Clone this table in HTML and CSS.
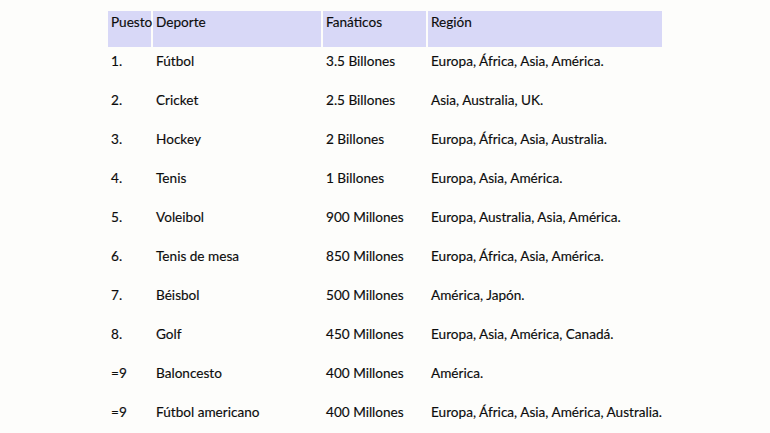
FILE: index.html
```html
<!DOCTYPE html>
<html lang="es">
<head>
<meta charset="utf-8">
<title>Deportes</title>
<link rel="stylesheet" href="styles.css">
</head>
<body>
<div class="page">
  <div class="table">
    <div class="cell head">Puesto</div>
    <div class="cell head">Deporte</div>
    <div class="cell head">Fanáticos</div>
    <div class="cell head">Región</div>

    <div class="cell">1.</div><div class="cell">Fútbol</div><div class="cell">3.5 Billones</div><div class="cell">Europa, África, Asia, América.</div>
    <div class="cell">2.</div><div class="cell">Cricket</div><div class="cell">2.5 Billones</div><div class="cell">Asia, Australia, UK.</div>
    <div class="cell">3.</div><div class="cell">Hockey</div><div class="cell">2 Billones</div><div class="cell">Europa, África, Asia, Australia.</div>
    <div class="cell">4.</div><div class="cell">Tenis</div><div class="cell">1 Billones</div><div class="cell">Europa, Asia, América.</div>
    <div class="cell">5.</div><div class="cell">Voleibol</div><div class="cell">900 Millones</div><div class="cell">Europa, Australia, Asia, América.</div>
    <div class="cell">6.</div><div class="cell">Tenis de mesa</div><div class="cell">850 Millones</div><div class="cell">Europa, África, Asia, América.</div>
    <div class="cell">7.</div><div class="cell">Béisbol</div><div class="cell">500 Millones</div><div class="cell">América, Japón.</div>
    <div class="cell">8.</div><div class="cell">Golf</div><div class="cell">450 Millones</div><div class="cell">Europa, Asia, América, Canadá.</div>
    <div class="cell">=9</div><div class="cell">Baloncesto</div><div class="cell">400 Millones</div><div class="cell">América.</div>
    <div class="cell">=9</div><div class="cell">Fútbol americano</div><div class="cell">400 Millones</div><div class="cell">Europa, África, Asia, América, Australia.</div>
  </div>
</div>
</body>
</html>
```

FILE: styles.css
```css
html, body {
  margin: 0;
  padding: 0;
  background: #fdfdfb;
}

.page {
  width: 770px;
  height: 433px;
  overflow: hidden;
  padding: 11px 0 0 108px;
  box-sizing: border-box;
  font-family: Lato, "Liberation Sans", sans-serif;
  font-size: 13.6px;
  color: #0c0c0c;
  -webkit-text-stroke: 0.15px #0c0c0c;
}

.table {
  display: grid;
  grid-template-columns: 43px 168px 103px 234px;
  grid-auto-rows: 36px;
  column-gap: 2px;
  row-gap: 3px;
}

.cell {
  padding: 4px 0 0 3px;
  line-height: 15px;
  white-space: nowrap;
}

.head {
  background: #d8d8f7;
}
```
